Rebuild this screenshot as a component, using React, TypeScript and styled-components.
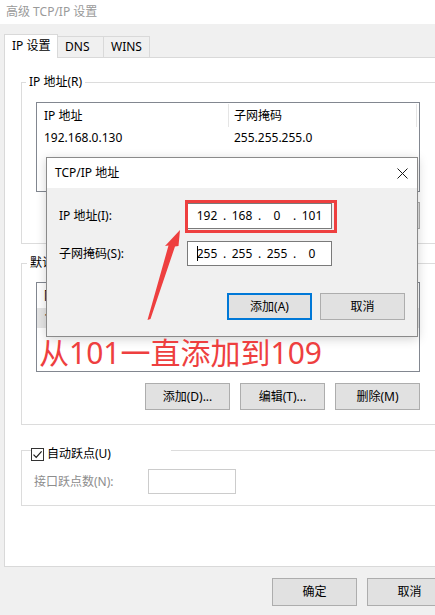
import styled, { createGlobalStyle } from 'styled-components'

const GlobalStyle = createGlobalStyle`
  html, body {
    margin: 0;
    padding: 0;
    overflow: hidden;
    background: #ffffff;
  }
  body {
    font-family: "Noto Sans", "Noto Sans CJK SC", sans-serif;
    font-size: 12px;
    color: #000000;
  }
`

const RED = '#ee3f3f'

interface Column {
  width: number
  text: string
}

const ipColumns: Column[] = [
  { width: 192, text: 'IP 地址' },
  { width: 188, text: '子网掩码' },
]

const gatewayColumns: Column[] = [
  { width: 192, text: '网关' },
  { width: 188, text: '跃点数' },
]

function ListView({
  columns,
  rows,
  selected,
}: {
  columns: Column[]
  rows: string[][]
  selected?: number
}): JSX.Element {
  return (
    <ListBox>
      <ListHeader>
        {columns.map((c, i) => (
          <HeadCell key={c.text} $width={c.width} $first={i === 0}>
            {c.text}
          </HeadCell>
        ))}
      </ListHeader>
      {rows.map((r, ri) => (
        <ListRow key={ri} $selected={selected === ri}>
          {r.map((v, ci) => (
            <RowCell key={ci} $width={columns[ci].width} $first={ci === 0}>
              {v}
            </RowCell>
          ))}
        </ListRow>
      ))}
    </ListBox>
  )
}

function IpInput({
  octets,
  height,
  caret = false,
}: {
  octets: string[]
  height: number
  caret?: boolean
}): JSX.Element {
  return (
    <IpField $height={height}>
      {octets.map((o, i) => (
        <span key={i} style={{ display: 'contents' }}>
          <Octet>
            {caret && i === 0 && <Caret />}
            {o}
          </Octet>
          {i < octets.length - 1 && <Dot>.</Dot>}
        </span>
      ))}
    </IpField>
  )
}

function App(): JSX.Element {
  return (
    <Window>
      <GlobalStyle />
      <TitleBar>高级 TCP/IP 设置</TitleBar>
      <TabStrip>
        <Tab $active $width={54}>
          IP 设置
        </Tab>
        <Tab $width={47}>DNS</Tab>
        <Tab $width={47}>WINS</Tab>
      </TabStrip>
      <Panel>
        <Group $mt={0} $pt={12} $pb={14}>
          <Legend>IP 地址(R)</Legend>
          <ListView
            columns={ipColumns}
            rows={[['192.168.0.130', '255.255.255.0']]}
          />
          <ButtonRow $mt={10}>
            <Button $height={27}>添加(A)...</Button>
            <Button $height={27}>编辑(E)...</Button>
            <Button $height={27}>删除(V)</Button>
          </ButtonRow>
        </Group>

        <Group $mt={11} $pt={11} $pb={14}>
          <Legend $shift={1}>默认网关(F):</Legend>
          <ListView
            columns={gatewayColumns}
            rows={[['192.168.0.1', '自动']]}
            selected={0}
          />
          <ButtonRow $mt={11}>
            <Button $height={27}>添加(D)...</Button>
            <Button $height={27}>编辑(T)...</Button>
            <Button $height={27}>删除(M)</Button>
          </ButtonRow>
        </Group>

        <Group $mt={13} $pt={7} $pb={11} $pl={12}>
          <CheckLegend>
            <CheckBox>
              <svg width="11" height="11" viewBox="0 0 11 11">
                <path
                  d="M1.5 5.6 L4.2 8.3 L9.6 2.4"
                  fill="none"
                  stroke="#1a1a1a"
                  strokeWidth="1.2"
                />
              </svg>
            </CheckBox>
            自动跃点(U)
          </CheckLegend>
          <MetricRow>
            <DisabledLabel>接口跃点数(N):</DisabledLabel>
            <DisabledInput />
          </MetricRow>
        </Group>
      </Panel>
      <Footer>
        <Button $height={28}>确定</Button>
        <Button $height={28}>取消</Button>
      </Footer>

      <Dialog>
        <DialogTitle>
          TCP/IP 地址
          <svg width="11" height="11" viewBox="0 0 11 11">
            <path
              d="M0.5 0.5 L10.5 10.5 M10.5 0.5 L0.5 10.5"
              stroke="#1a1a1a"
              strokeWidth="1"
            />
          </svg>
        </DialogTitle>
        <DialogBody>
          <FieldGrid>
            <FieldLabel>IP 地址(I):</FieldLabel>
            <IpInput octets={['192', '168', '0', '101']} height={26} />
            <FieldLabel>子网掩码(S):</FieldLabel>
            <IpInput octets={['255', '255', '255', '0']} height={25} caret />
          </FieldGrid>
          <DialogButtons>
            <Button $height={27} $default>
              添加(A)
            </Button>
            <Button $height={27}>取消</Button>
          </DialogButtons>
        </DialogBody>
      </Dialog>

      <Highlight />
      <Arrow viewBox="140 222 50 100" width="50" height="100">
        <polygon
          points="180,230 178.5,246 175,246.5 150.5,319 147.5,320 168.5,245.5 165,246"
          fill={RED}
        />
      </Arrow>
      <Note>从101一直添加到109</Note>
    </Window>
  )
}

export default App

const Window = styled.div`
  position: relative;
  width: 458px;
  height: 615px;
  display: flex;
  flex-direction: column;
  background: #f0f0f0;
  overflow: hidden;
`

const TitleBar = styled.div`
  height: 24px;
  flex: none;
  display: flex;
  align-items: center;
  padding-left: 6px;
  background: #ffffff;
  color: #9a9a9a;
  line-height: 16px;
`

const TabStrip = styled.div`
  height: 33px;
  flex: none;
  display: flex;
  align-items: flex-end;
  padding-left: 4px;
  box-sizing: border-box;
`

const Tab = styled.div<{ $active?: boolean; $width: number }>`
  position: relative;
  z-index: ${({ $active }) => ($active ? 1 : 0)};
  box-sizing: border-box;
  width: ${({ $width }) => $width}px;
  height: ${({ $active }) => ($active ? '24px' : '21px')};
  margin-bottom: ${({ $active }) => ($active ? '-1px' : '0')};
  margin-left: -1px;
  display: flex;
  align-items: center;
  padding-left: 7px;
  padding-bottom: ${({ $active }) => ($active ? '2px' : '0')};
  background: ${({ $active }) => ($active ? '#ffffff' : '#f0f0f0')};
  border: 1px solid #d9d9d9;
  border-bottom: none;
  line-height: 16px;

  &:first-child {
    margin-left: 0;
  }
`

const Panel = styled.div`
  flex: 1;
  margin: 0 4px;
  padding: 16px 16px 0;
  display: flex;
  flex-direction: column;
  background: #ffffff;
  border: 1px solid #d9d9d9;
`

const Group = styled.fieldset<{ $mt: number; $pt: number; $pb: number; $pl?: number }>`
  margin: ${({ $mt }) => $mt}px 0 0;
  padding: ${({ $pt, $pb, $pl = 14 }) => `${$pt}px 16px ${$pb}px ${$pl}px`};
  border: 1px solid #dcdcdc;
  min-width: 0;
`

/* legends sit inside the fieldset padding, so pull them back to the border */
const Legend = styled.legend<{ $shift?: number }>`
  margin-left: ${({ $shift = 0 }) => -10 + $shift}px;
  padding: 0 3px;
  line-height: 16px;
  font-size: 12px;
`

const CheckLegend = styled.legend`
  margin-left: -3px;
  padding: 8px 0 0;
  width: 140px;
  box-sizing: border-box;
  display: flex;
  align-items: center;
  gap: 3px;
  line-height: 16px;
`

const CheckBox = styled.span`
  width: 13px;
  height: 13px;
  box-sizing: border-box;
  border: 1px solid #333333;
  background: #ffffff;
  display: flex;
  align-items: center;
  justify-content: center;
`

const ListBox = styled.div`
  height: 90px;
  box-sizing: border-box;
  border: 1px solid #828790;
  background: #ffffff;
`

const ListHeader = styled.div`
  display: flex;
  height: 25px;
`

const HeadCell = styled.div<{ $width: number; $first: boolean }>`
  width: ${({ $width }) => $width}px;
  box-sizing: border-box;
  padding-left: ${({ $first }) => ($first ? '7px' : '5px')};
  margin: 1px 0;
  border-right: 1px solid #e5e5e5;
  display: flex;
  align-items: center;
  line-height: 16px;
`

const ListRow = styled.div<{ $selected?: boolean }>`
  display: flex;
  height: 20px;
  line-height: 20px;
  background: ${({ $selected }) => ($selected ? '#e5e5e5' : 'transparent')};
`

const RowCell = styled.div<{ $width: number; $first: boolean }>`
  width: ${({ $width }) => $width}px;
  box-sizing: border-box;
  padding-left: ${({ $first }) => ($first ? '7px' : '5px')};
`

const ButtonRow = styled.div<{ $mt: number }>`
  display: flex;
  justify-content: flex-end;
  gap: 10px;
  margin-top: ${({ $mt }) => $mt}px;
`

const Button = styled.button<{ $height: number; $default?: boolean }>`
  width: 85px;
  height: ${({ $height }) => $height}px;
  box-sizing: border-box;
  padding: 0;
  font: inherit;
  color: #000000;
  background: #e1e1e1;
  border: ${({ $default }) => ($default ? '2px solid #0078d7' : '1px solid #adadad')};
  line-height: 16px;
`

const MetricRow = styled.div`
  display: flex;
  align-items: center;
`

const DisabledLabel = styled.div`
  width: 114px;
  color: #8d8d8d;
  line-height: 16px;
`

const DisabledInput = styled.div`
  width: 88px;
  height: 25px;
  box-sizing: border-box;
  border: 1px solid #cccccc;
  background: #ffffff;
`

const Footer = styled.div`
  height: 48px;
  flex: none;
  display: flex;
  justify-content: flex-end;
  align-items: flex-start;
  gap: 10px;
  padding: 11px 6px 0 0;
  box-sizing: border-box;
`

const Dialog = styled.div`
  position: absolute;
  left: 46px;
  top: 157px;
  z-index: 5;
  width: 372px;
  height: 180px;
  box-sizing: border-box;
  display: flex;
  flex-direction: column;
  background: #f0f0f0;
  border: 1px solid #8a8a8a;
  box-shadow: 0 2px 10px rgba(0, 0, 0, 0.18);
`

const DialogTitle = styled.div`
  height: 30px;
  flex: none;
  display: flex;
  align-items: center;
  justify-content: space-between;
  padding: 0 9px 0 8px;
  background: #ffffff;
  line-height: 16px;
`

const DialogBody = styled.div`
  flex: 1;
  padding: 15px 12px 0;
`

const FieldGrid = styled.div`
  display: grid;
  grid-template-columns: 128px 145px;
  row-gap: 12px;
  align-items: center;
`

const FieldLabel = styled.div`
  line-height: 16px;
`

const IpField = styled.div<{ $height: number }>`
  height: ${({ $height }) => $height}px;
  box-sizing: border-box;
  display: flex;
  align-items: center;
  padding-left: 4px;
  border: 1px solid #7a7a7a;
  background: #ffffff;
  line-height: 16px;
`

const Octet = styled.span`
  width: 30px;
  text-align: center;
`

const Dot = styled.span`
  width: 5px;
  text-align: center;
`

const Caret = styled.span`
  display: inline-block;
  width: 1px;
  height: 15px;
  margin-right: -1px;
  vertical-align: -3px;
  background: #000000;
`

const DialogButtons = styled.div`
  display: flex;
  justify-content: flex-end;
  gap: 8px;
  margin-top: 27px;
`

const Highlight = styled.div`
  position: absolute;
  left: 185px;
  top: 200px;
  z-index: 6;
  width: 152px;
  height: 33px;
  box-sizing: border-box;
  border: 3px solid ${RED};
`

const Arrow = styled.svg`
  position: absolute;
  left: 140px;
  top: 222px;
  z-index: 6;
`

const Note = styled.div`
  position: absolute;
  left: 39px;
  top: 335px;
  z-index: 6;
  font-family: "Noto Sans", "Noto Sans CJK SC", sans-serif;
  font-size: 30px;
  line-height: 36px;
  color: ${RED};
  white-space: nowrap;
`
